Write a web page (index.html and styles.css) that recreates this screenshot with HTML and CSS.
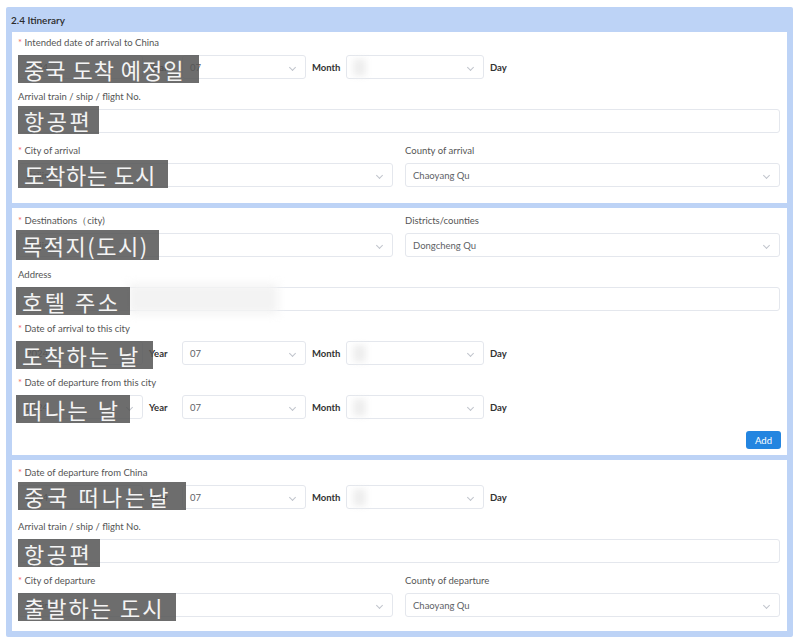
FILE: index.html
```html
<!DOCTYPE html>
<html lang="en">
<head>
    <meta charset="UTF-8">
    <meta name="viewport" content="width=device-width, initial-scale=1.0">
    <title>Itinerary</title>
    <link rel="stylesheet" href="styles.css">
</head>
<body>
    <div class="panel">
        <div class="panel-title">2.4 Itinerary</div>

        <div class="section">
            <div class="item">
                <div class="label"><span class="req">*</span> Intended date of arrival to China</div>
                <div class="control date-row">
                    <div class="select w-year">2024<i class="chev"></i></div>
                    <span class="unit u-year">Year</span>
                    <div class="select w-month">07<i class="chev"></i></div>
                    <span class="unit u-month">Month</span>
                    <div class="select w-day"><span class="blot"></span><i class="chev"></i></div>
                    <span class="unit">Day</span>
                    <div class="mask m-181">중국 도착 예정일</div>
                </div>
            </div>
            <div class="item">
                <div class="label">Arrival train / ship / flight No.</div>
                <div class="control">
                    <div class="input"></div>
                    <div class="mask up m-81">항공편</div>
                </div>
            </div>
            <div class="item grid">
                <div>
                    <div class="label"><span class="req">*</span> City of arrival</div>
                    <div class="control">
                        <div class="select">Beijing<i class="chev"></i></div>
                        <div class="mask up m-150">도착하는 도시</div>
                    </div>
                </div>
                <div>
                    <div class="label">County of arrival</div>
                    <div class="control">
                        <div class="select">Chaoyang Qu<i class="chev"></i></div>
                    </div>
                </div>
            </div>
        </div>

        <div class="section">
            <div class="item grid">
                <div>
                    <div class="label"><span class="req">*</span> Destinations（city)</div>
                    <div class="control">
                        <div class="select">Beijing<i class="chev"></i></div>
                        <div class="mask up tall shift m-143">목적지(도시)</div>
                    </div>
                </div>
                <div>
                    <div class="label">Districts/counties</div>
                    <div class="control">
                        <div class="select">Dongcheng Qu<i class="chev"></i></div>
                    </div>
                </div>
            </div>
            <div class="item">
                <div class="label">Address</div>
                <div class="control">
                    <div class="input"></div>
                    <span class="smudge"></span>
                    <div class="mask shift m-114">호텔 주소</div>
                </div>
            </div>
            <div class="item">
                <div class="label"><span class="req">*</span> Date of arrival to this city</div>
                <div class="control date-row">
                    <div class="select w-year">2024<i class="chev"></i></div>
                    <span class="unit u-year">Year</span>
                    <div class="select w-month">07<i class="chev"></i></div>
                    <span class="unit u-month">Month</span>
                    <div class="select w-day"><span class="blot"></span><i class="chev"></i></div>
                    <span class="unit">Day</span>
                    <div class="mask shift m-137">도착하는 날</div>
                </div>
            </div>
            <div class="item">
                <div class="label"><span class="req">*</span> Date of departure from this city</div>
                <div class="control date-row">
                    <div class="select w-year">2024<i class="chev"></i></div>
                    <span class="unit u-year">Year</span>
                    <div class="select w-month">07<i class="chev"></i></div>
                    <span class="unit u-month">Month</span>
                    <div class="select w-day"><span class="blot"></span><i class="chev"></i></div>
                    <span class="unit">Day</span>
                    <div class="mask shift m-114">떠나는 날</div>
                </div>
            </div>
            <div class="actions">
                <button class="btn-add">Add</button>
            </div>
        </div>

        <div class="section">
            <div class="item">
                <div class="label"><span class="req">*</span> Date of departure from China</div>
                <div class="control date-row">
                    <div class="select w-year">2024<i class="chev"></i></div>
                    <span class="unit u-year">Year</span>
                    <div class="select w-month">07<i class="chev"></i></div>
                    <span class="unit u-month">Month</span>
                    <div class="select w-day"><span class="blot"></span><i class="chev"></i></div>
                    <span class="unit">Day</span>
                    <div class="mask up m-168">중국 떠나는날</div>
                </div>
            </div>
            <div class="item">
                <div class="label">Arrival train / ship / flight No.</div>
                <div class="control">
                    <div class="input"></div>
                    <div class="mask m-82">항공편</div>
                </div>
            </div>
            <div class="item grid">
                <div>
                    <div class="label"><span class="req">*</span> City of departure</div>
                    <div class="control">
                        <div class="select">Beijing<i class="chev"></i></div>
                        <div class="mask m-158">출발하는 도시</div>
                    </div>
                </div>
                <div>
                    <div class="label">County of departure</div>
                    <div class="control">
                        <div class="select">Chaoyang Qu<i class="chev"></i></div>
                    </div>
                </div>
            </div>
        </div>
    </div>
</body>
</html>
```

FILE: styles.css
```css
body {
    margin: 0;
    padding: 7px 7px 0 6px;
    background-color: #ffffff;
    font-family: Lato, "Noto Sans", sans-serif;
    font-size: 9.5px;
    color: #333333;
}
.panel {
    background-color: #bdd3f6;
    padding: 0 6px 6px;
    border-radius: 2px;
    display: flex;
    flex-direction: column;
    gap: 5px;
}
.panel-title {
    height: 25px;
    line-height: 26px;
    padding-left: 5px;
    margin-bottom: -5px;
    font-size: 10px;
    font-weight: 600;
    color: #2b2b2b;
    margin-left: -6px;
}
.section {
    background-color: #ffffff;
    padding: 5px 7px 16px 6px;
}
.section + .section {
    padding-top: 7px;
    padding-bottom: 6px;
}
.section:last-child {
    padding-bottom: 14px;
}
.item {
    margin-bottom: 12px;
}
.item:last-child {
    margin-bottom: 0;
}
.grid {
    display: grid;
    grid-template-columns: 1fr 1fr;
    column-gap: 12px;
}
.label {
    height: 12px;
    line-height: 12px;
    margin-bottom: 6px;
    color: #555555;
    white-space: nowrap;
}
.req {
    color: #f56c6c;
}
.control {
    position: relative;
    height: 24px;
}
.date-row {
    display: flex;
    align-items: center;
}
.select, .input {
    box-sizing: border-box;
    height: 24px;
    border: 1px solid #e4e7ed;
    border-radius: 3px;
    background-color: #ffffff;
    padding: 0 7px;
    display: flex;
    align-items: center;
    color: #606266;
    position: relative;
}
.w-year { width: 125px; }
.w-month { width: 124px; }
.w-day { width: 138px; }
.unit {
    font-weight: 700;
    color: #333333;
    padding-left: 6px;
}
.u-year { width: 33px; }
.u-month { width: 34px; }
.chev {
    position: absolute;
    right: 10px;
    top: 9px;
    width: 4px;
    height: 4px;
    border-right: 1px solid #c0c4cc;
    border-bottom: 1px solid #c0c4cc;
    transform: rotate(45deg);
}
.blot {
    position: absolute;
    left: 6px;
    top: 3px;
    width: 13px;
    height: 17px;
    background-color: #eeeeee;
    filter: blur(3px);
}
.smudge {
    position: absolute;
    left: 110px;
    top: -3px;
    width: 150px;
    height: 30px;
    background-color: #f3f3f3;
    filter: blur(5px);
}
.mask {
    box-sizing: border-box;
    position: absolute;
    left: 0;
    top: 0;
    height: 28px;
    padding: 0 0 0 6px;
    display: flex;
    align-items: center;
    background-color: rgba(85, 85, 85, 0.86);
    color: #f4f4f4;
    font-family: "Noto Sans CJK KR", sans-serif;
    font-size: 22px;
    letter-spacing: 2px;
    white-space: nowrap;
}
.mask.up { top: -3px; }
.mask.tall { height: 30px; }
.mask.shift { left: -2px; }
.m-181 { width: 181px; letter-spacing: 1px; }
.m-81 { width: 81px; letter-spacing: 2.5px; }
.m-150 { width: 150px; letter-spacing: 0.8px; }
.m-143 { width: 143px; letter-spacing: 1.5px; }
.m-114 { width: 114px; letter-spacing: 2.5px; }
.m-137 { width: 137px; letter-spacing: 2px; }
.m-168 { width: 168px; letter-spacing: 3px; }
.m-82 { width: 82px; letter-spacing: 2.5px; }
.m-158 { width: 158px; letter-spacing: 2px; }
.actions {
    display: flex;
    justify-content: flex-end;
    margin-top: 10px;
}
.btn-add {
    width: 35px;
    height: 18px;
    border: none;
    border-radius: 3px;
    background-color: #2385e0;
    color: #ffffff;
    font-family: Lato, "Noto Sans", sans-serif;
    font-size: 9.5px;
    padding: 0;
    margin-right: -1px;
}
```
